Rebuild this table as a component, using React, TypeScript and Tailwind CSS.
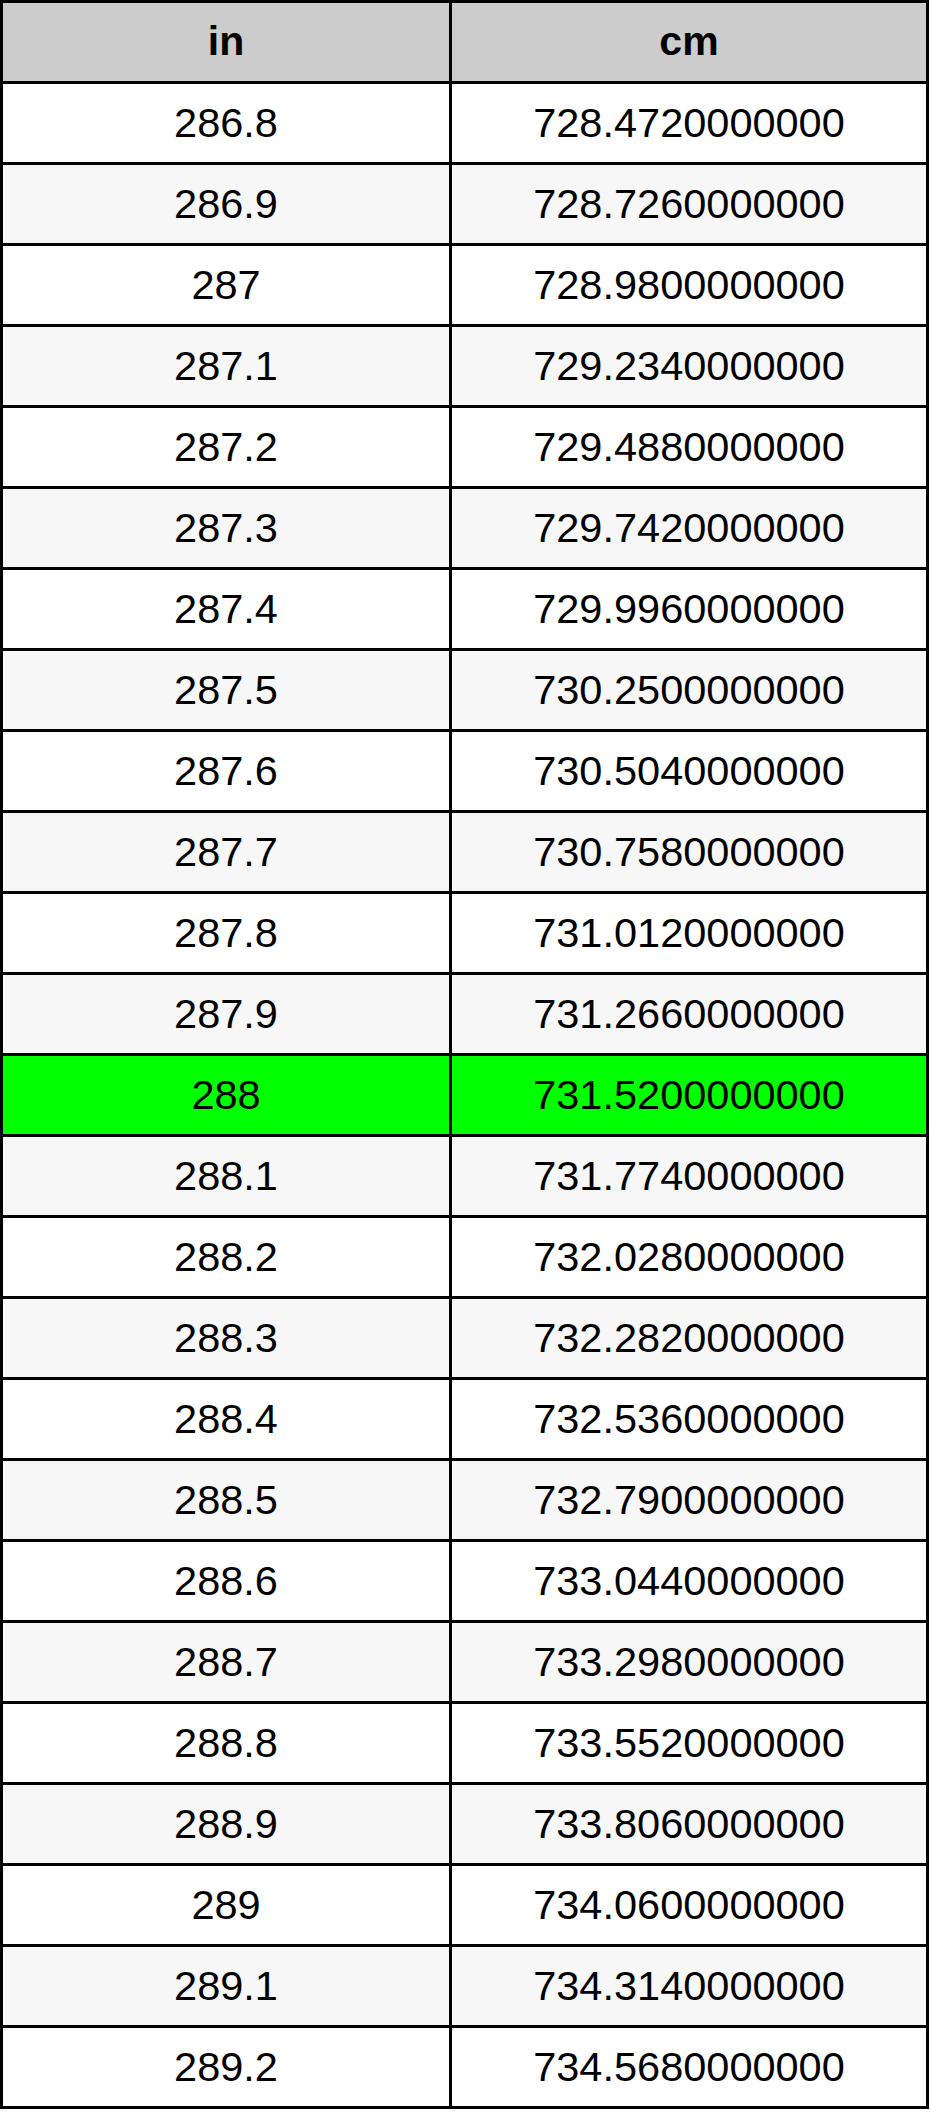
const rows: [string, string][] = [
  ['286.8', '728.4720000000'],
  ['286.9', '728.7260000000'],
  ['287', '728.9800000000'],
  ['287.1', '729.2340000000'],
  ['287.2', '729.4880000000'],
  ['287.3', '729.7420000000'],
  ['287.4', '729.9960000000'],
  ['287.5', '730.2500000000'],
  ['287.6', '730.5040000000'],
  ['287.7', '730.7580000000'],
  ['287.8', '731.0120000000'],
  ['287.9', '731.2660000000'],
  ['288', '731.5200000000'],
  ['288.1', '731.7740000000'],
  ['288.2', '732.0280000000'],
  ['288.3', '732.2820000000'],
  ['288.4', '732.5360000000'],
  ['288.5', '732.7900000000'],
  ['288.6', '733.0440000000'],
  ['288.7', '733.2980000000'],
  ['288.8', '733.5520000000'],
  ['288.9', '733.8060000000'],
  ['289', '734.0600000000'],
  ['289.1', '734.3140000000'],
  ['289.2', '734.5680000000'],
]

export default function App() {
  return (
    <div className="bg-white min-h-[2115px] font-['Liberation_Sans',Arial,sans-serif] text-black">
      <div className="w-[929px] border-l-[3px] border-t-[3px] border-black grid grid-cols-[449px_477px]">
        <div className="h-[81px] flex items-center justify-center bg-[#cccccc] border-r-[3px] border-b-[3px] border-black text-[41px] font-bold">
          in
        </div>
        <div className="h-[81px] flex items-center justify-center bg-[#cccccc] border-r-[3px] border-b-[3px] border-black text-[41px] font-bold">
          cm
        </div>
        {rows.map(([inch, cm], idx) => {
          const isTarget = inch === '288'
          const bg = isTarget ? 'bg-[#00ff00]' : idx % 2 === 1 ? 'bg-[#f7f7f7]' : 'bg-white'
          return [
            <div
              key={`${inch}-in`}
              className={`h-[81px] flex items-center justify-center border-r-[3px] border-b-[3px] border-black text-[41.5px] ${bg}`}
            >
              {inch}
            </div>,
            <div
              key={`${inch}-cm`}
              className={`h-[81px] flex items-center justify-center border-r-[3px] border-b-[3px] border-black text-[41.5px] ${bg}`}
            >
              {cm}
            </div>,
          ]
        })}
      </div>
    </div>
  )
}
